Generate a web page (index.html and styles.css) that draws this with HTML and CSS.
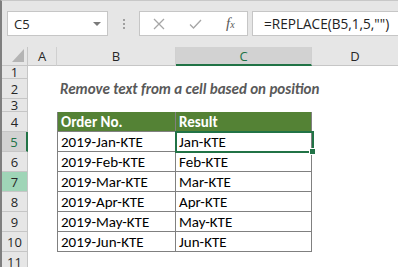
FILE: index.html
```html
<!DOCTYPE html>
<html lang="en">
<head>
    <meta charset="UTF-8">
    <meta name="viewport" content="width=device-width, initial-scale=1.0">
    <title>REPLACE</title>
    <link rel="stylesheet" href="styles.css">
</head>
<body>

    <div class="app">
        <!-- Barra de fórmulas -->
        <div class="formula-bar">
            <div class="name-box">
                <span>C5</span>
                <span class="caret"></span>
            </div>
            <div class="dots"><i></i><i></i><i></i></div>
            <div class="fx-buttons">
                <svg width="12" height="12" viewBox="0 0 12 12"><path d="M1 1 L11 11 M11 1 L1 11" stroke="#a6a6a6" stroke-width="1.3" fill="none"/></svg>
                <svg width="13" height="12" viewBox="0 0 13 12"><path d="M1 6.5 L4.5 10 L12 2" stroke="#a6a6a6" stroke-width="1.3" fill="none"/></svg>
                <span class="fx">f<sub>x</sub></span>
            </div>
            <div class="formula">=REPLACE(B5,1,5,"")</div>
        </div>

        <!-- Planilha -->
        <div class="sheet">
            <div class="corner"><span class="tri"></span></div>
            <div class="col-head">A</div>
            <div class="col-head">B</div>
            <div class="col-head active">C</div>
            <div class="col-head last">D</div>

            <div class="row-head">1</div><div class="cell"></div><div class="cell"></div><div class="cell"></div><div class="cell"></div>
            <div class="row-head">2</div><div class="cell"></div><div class="cell title">Remove text from a cell based on position</div><div class="cell"></div><div class="cell"></div>
            <div class="row-head">3</div><div class="cell"></div><div class="cell"></div><div class="cell"></div><div class="cell"></div>
            <div class="row-head">4</div><div class="cell"></div><div class="tc th first">Order No.</div><div class="tc th">Result</div><div class="cell"></div>
            <div class="row-head active">5</div><div class="cell"></div><div class="tc first">2019-Jan-KTE</div><div class="tc selected">Jan-KTE<span class="handle"></span></div><div class="cell"></div>
            <div class="row-head">6</div><div class="cell"></div><div class="tc first">2019-Feb-KTE</div><div class="tc">Feb-KTE</div><div class="cell"></div>
            <div class="row-head hover">7</div><div class="cell"></div><div class="tc first">2019-Mar-KTE</div><div class="tc">Mar-KTE</div><div class="cell"></div>
            <div class="row-head">8</div><div class="cell"></div><div class="tc first">2019-Apr-KTE</div><div class="tc">Apr-KTE</div><div class="cell"></div>
            <div class="row-head">9</div><div class="cell"></div><div class="tc first">2019-May-KTE</div><div class="tc">May-KTE</div><div class="cell"></div>
            <div class="row-head">10</div><div class="cell"></div><div class="tc first">2019-Jun-KTE</div><div class="tc">Jun-KTE</div><div class="cell"></div>
            <div class="row-head">11</div><div class="cell"></div><div class="cell"></div><div class="cell"></div><div class="cell"></div>
        </div>
    </div>

</body>
</html>
```

FILE: styles.css
```css
body {
    margin: 0;
    padding: 0;
    font-family: "Open Sans", "Noto Sans", sans-serif;
    background-color: #fff;
}

* {
    box-sizing: border-box;
}

.app {
    width: 398px;
    height: 267px;
    overflow: hidden;
    border-left: 2px solid #7f7f7f;
    border-top: 1px solid #c8c8c8;
}

/* Barra de fórmulas */
.formula-bar {
    height: 46px;
    background-color: #e6e6e6;
    display: flex;
    align-items: flex-start;
    padding: 10px 0 0 5px;
}

.name-box {
    width: 101px;
    height: 25px;
    background-color: #fff;
    border: 1px solid #c6c6c6;
    display: flex;
    align-items: center;
    justify-content: space-between;
    padding: 0 6px 0 6px;
    font-size: 13px;
    color: #262626;
}

.caret {
    width: 0;
    height: 0;
    border-left: 4px solid transparent;
    border-right: 4px solid transparent;
    border-top: 4px solid #7a7a7a;
}

.dots {
    width: 31px;
    height: 25px;
    display: flex;
    flex-direction: column;
    align-items: center;
    justify-content: center;
    gap: 2px;
}

.dots i {
    width: 2px;
    height: 2px;
    background-color: #a0a0a0;
}

.fx-buttons {
    width: 109px;
    height: 25px;
    background-color: #fff;
    border: 1px solid #c6c6c6;
    display: flex;
    align-items: center;
    padding-left: 13px;
    gap: 24px;
}

.fx {
    font-family: "Liberation Serif", serif;
    font-style: italic;
    font-size: 15px;
    color: #595959;
    margin-left: 0;
}

.fx sub {
    font-size: 10px;
    vertical-align: 0;
}

.formula {
    flex: 1;
    height: 25px;
    margin-left: 4px;
    background-color: #fff;
    border: 1px solid #c6c6c6;
    border-right: none;
    padding-left: 11px;
    font-size: 13.6px;
    line-height: 23px;
    color: #222;
    white-space: nowrap;
}

/* Planilha */
.sheet {
    display: grid;
    grid-template-columns: 26px 29px 119px 136px 1fr;
    grid-template-rows: 19px 13px 20px 13px repeat(8, 20px);
    background-color: #fff;
}

.corner {
    background-color: #e6e6e6;
    border-right: 1px solid #c6c6c6;
    border-bottom: 1px solid #c6c6c6;
    position: relative;
}

.corner .tri {
    position: absolute;
    right: 3px;
    bottom: 3px;
    width: 12px;
    height: 13px;
    background-color: #b4b4b4;
    clip-path: polygon(100% 0, 100% 100%, 0 100%);
}

.col-head {
    background-color: #e6e6e6;
    border-right: 1px solid #d0d0d0;
    border-bottom: 1px solid #c6c6c6;
    font-size: 13px;
    color: #262626;
    text-align: center;
    line-height: 19px;
}

.col-head.last {
    border-right: none;
}

.col-head.active {
    background-color: #d2d2d2;
    color: #217346;
    border-bottom: 2px solid #217346;
}

.row-head {
    background-color: #e6e6e6;
    border-right: 1px solid #c6c6c6;
    border-bottom: 1px solid #c6c6c6;
    font-size: 13px;
    color: #262626;
    text-align: center;
    display: flex;
    align-items: center;
    justify-content: center;
    overflow: hidden;
}

.row-head.active {
    background-color: #d2d2d2;
    color: #217346;
    border-right: 2px solid #217346;
}

.row-head.hover {
    background-color: #9fd5b7;
}

.cell,
.tc {
    font-family: "Carlito", "Lato", sans-serif;
    font-size: 15px;
    color: #000;
    white-space: nowrap;
    display: flex;
    align-items: center;
    padding-left: 3px;
}

.title {
    font-weight: bold;
    font-style: italic;
    color: #595959;
    overflow: visible;
}

.tc {
    border-right: 1px solid #808080;
    border-bottom: 1px solid #808080;
}

.tc.first {
    border-left: 1px solid #808080;
}

.tc.th {
    background-color: #548235;
    color: #fff;
    font-weight: bold;
}

.tc.selected {
    position: relative;
}

/* Borda da célula selecionada */
.tc.selected::after {
    content: "";
    position: absolute;
    top: -1px;
    left: -1px;
    right: -3px;
    bottom: -2px;
    border: 2px solid #217346;
}

.handle {
    position: absolute;
    right: -5px;
    bottom: -4px;
    width: 7px;
    height: 7px;
    background-color: #217346;
    border: 1px solid #fff;
    z-index: 1;
}
```
